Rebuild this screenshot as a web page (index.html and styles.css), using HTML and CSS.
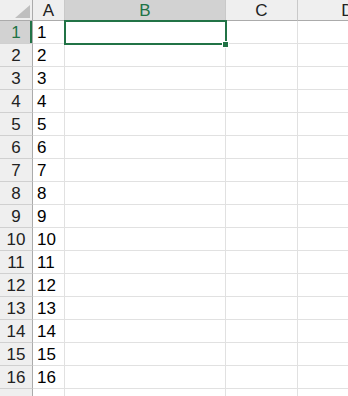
FILE: index.html
```html
<!DOCTYPE html>
<html lang="zh">
<head>
<meta charset="utf-8">
<title>Sheet</title>
<link rel="stylesheet" href="styles.css">
</head>
<body>
<div class="sheet">
  <div class="grid">
    <div class="hd corner"><span class="tri"></span></div>
    <div class="hd col">A</div>
    <div class="hd col sel">B</div>
    <div class="hd col">C</div>
    <div class="hd col">D</div>

    <div class="rh sel">1</div><div class="c a">1</div><div class="c"></div><div class="c"></div><div class="c"></div>
    <div class="rh">2</div><div class="c a">2</div><div class="c"></div><div class="c"></div><div class="c"></div>
    <div class="rh">3</div><div class="c a">3</div><div class="c"></div><div class="c"></div><div class="c"></div>
    <div class="rh">4</div><div class="c a">4</div><div class="c"></div><div class="c"></div><div class="c"></div>
    <div class="rh">5</div><div class="c a">5</div><div class="c"></div><div class="c"></div><div class="c"></div>
    <div class="rh">6</div><div class="c a">6</div><div class="c"></div><div class="c"></div><div class="c"></div>
    <div class="rh">7</div><div class="c a">7</div><div class="c"></div><div class="c"></div><div class="c"></div>
    <div class="rh">8</div><div class="c a">8</div><div class="c"></div><div class="c"></div><div class="c"></div>
    <div class="rh">9</div><div class="c a">9</div><div class="c"></div><div class="c"></div><div class="c"></div>
    <div class="rh">10</div><div class="c a">10</div><div class="c"></div><div class="c"></div><div class="c"></div>
    <div class="rh">11</div><div class="c a">11</div><div class="c"></div><div class="c"></div><div class="c"></div>
    <div class="rh">12</div><div class="c a">12</div><div class="c"></div><div class="c"></div><div class="c"></div>
    <div class="rh">13</div><div class="c a">13</div><div class="c"></div><div class="c"></div><div class="c"></div>
    <div class="rh">14</div><div class="c a">14</div><div class="c"></div><div class="c"></div><div class="c"></div>
    <div class="rh">15</div><div class="c a">15</div><div class="c"></div><div class="c"></div><div class="c"></div>
    <div class="rh">16</div><div class="c a">16</div><div class="c"></div><div class="c"></div><div class="c"></div>
    <div class="rh"></div><div class="c a"></div><div class="c"></div><div class="c"></div><div class="c"></div>
  </div>
  <div class="selbox"></div>
  <div class="handle"></div>
</div>
</body>
</html>
```

FILE: styles.css
```css
html, body {
  margin: 0;
  padding: 0;
  background: #ffffff;
  overflow: hidden;
}
.sheet {
  position: relative;
  width: 348px;
  height: 396px;
  overflow: hidden;
  font-family: "Liberation Sans", Arial, sans-serif;
  font-size: 17px;
  color: #000;
}
.grid {
  display: grid;
  grid-template-columns: 33px 32px 161px 72px 100px;
  grid-template-rows: 21px repeat(17, 23px);
}
.hd {
  box-sizing: border-box;
  background: #efefef;
  border-right: 1px solid #c9c9c9;
  border-bottom: 1px solid #ababab;
  text-align: center;
  line-height: 20px;
  padding-top: 1px;
  color: #222;
}
.hd.sel {
  background: #d2d2d2;
  color: #217346;
}
.corner {
  position: relative;
  border-right: 1px solid #ababab;
}
.tri {
  position: absolute;
  right: 2px;
  bottom: 2px;
  width: 0;
  height: 0;
  border-style: solid;
  border-width: 0 0 13px 15px;
  border-color: transparent transparent #bfbfbf transparent;
}
.rh {
  box-sizing: border-box;
  background: #efefef;
  border-right: 1px solid #ababab;
  border-bottom: 1px solid #d0d0d0;
  text-align: center;
  line-height: 22px;
  padding-top: 1px;
  color: #222;
}
.rh.sel {
  background: #d2d2d2;
  color: #217346;
  box-shadow: inset -2px 0 0 #217346;
}
.c {
  box-sizing: border-box;
  border-right: 1px solid #e1e1e1;
  border-bottom: 1px solid #e1e1e1;
  line-height: 22px;
  padding-top: 1px;
  white-space: nowrap;
}
.c.a {
  padding-left: 4px;
}
.selbox {
  position: absolute;
  left: 64px;
  top: 20px;
  width: 163px;
  height: 25px;
  box-sizing: border-box;
  border: 2px solid #217346;
}
.handle {
  position: absolute;
  left: 222px;
  top: 41px;
  width: 5px;
  height: 5px;
  background: #217346;
  border: 1px solid #ffffff;
}
```
